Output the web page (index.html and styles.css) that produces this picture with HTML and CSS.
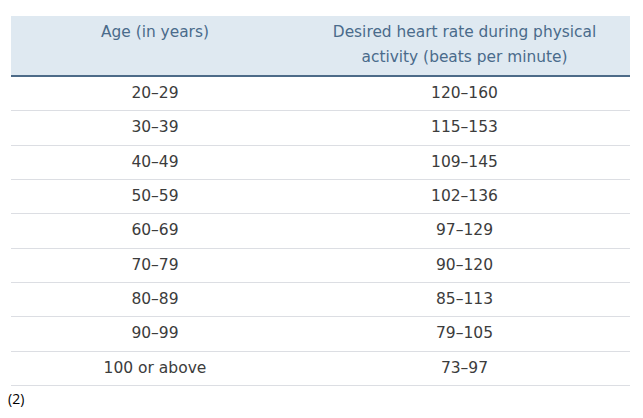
FILE: index.html
```html
<!DOCTYPE html>
<html lang="en">
<head>
<meta charset="utf-8">
<title>Desired heart rate</title>
<link rel="stylesheet" href="styles.css">
</head>
<body>
<div class="wrap">
  <table class="hr-table">
    <colgroup>
      <col class="col-age">
      <col class="col-rate">
    </colgroup>
    <thead>
      <tr>
        <th>Age (in years)</th>
        <th>Desired heart rate during physical activity (beats per minute)</th>
      </tr>
    </thead>
    <tbody>
      <tr><td>20–29</td><td>120–160</td></tr>
      <tr><td>30–39</td><td>115–153</td></tr>
      <tr><td>40–49</td><td>109–145</td></tr>
      <tr><td>50–59</td><td>102–136</td></tr>
      <tr><td>60–69</td><td>97–129</td></tr>
      <tr><td>70–79</td><td>90–120</td></tr>
      <tr><td>80–89</td><td>85–113</td></tr>
      <tr><td>90–99</td><td>79–105</td></tr>
      <tr><td>100 or above</td><td>73–97</td></tr>
    </tbody>
  </table>
  <p class="note">(2)</p>
</div>
</body>
</html>
```

FILE: styles.css
```css
html, body {
  margin: 0;
  padding: 0;
  background: #ffffff;
}
.wrap {
  padding: 16px 0 0 11px;
}
.hr-table {
  width: 619px;
  border-collapse: collapse;
  font-family: "DejaVu Sans", sans-serif;
  color: #3c3c3c;
}
.col-age { width: 288px; }
.col-rate { width: 331px; }
.hr-table th {
  background: #dfe9f1;
  color: #4a6b8b;
  font-size: 15.4px;
  font-weight: normal;
  text-align: center;
  vertical-align: top;
  line-height: 25px;
  padding: 4px 20px 5px;
  border-bottom: 2px solid #4d6b88;
}
.hr-table td {
  font-size: 15.5px;
  text-align: center;
  line-height: 21.33px;
  padding: 6px 10px;
  border-bottom: 1px solid #dcdee3;
}
.note {
  margin: 4px 0 0 -3px;
  font-family: "Open Sans", sans-serif;
  font-size: 14px;
  line-height: 18px;
  color: #000;
}
```
